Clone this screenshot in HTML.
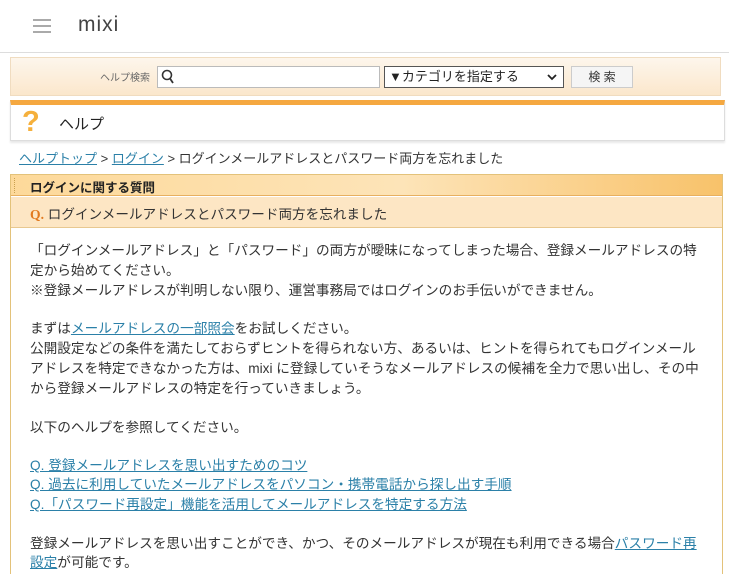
<!DOCTYPE html>
<html style="overflow:hidden;width:729px;height:574px"><head><meta charset="utf-8"><style>
*{margin:0;padding:0;box-sizing:border-box}
body{width:729px;height:574px;overflow:hidden;background:#fff;font-family:"Liberation Sans","Noto Sans CJK JP",sans-serif;color:#333;position:relative}
.a{position:absolute;white-space:nowrap}
a{color:#2b80a8;text-decoration:underline}
.t{font-size:13.65px;line-height:19px}
</style></head><body>
<div class="a" style="left:33px;top:19px;width:18px;height:2px;background:#aaa;box-shadow:0 6px 0 #aaa,0 12px 0 #aaa"></div>
<div class="a" style="left:78px;top:13px;font-size:21px;color:#444;letter-spacing:1px">mixi</div>
<div class="a" style="left:0;top:52px;width:729px;height:1px;background:#ddd"></div>

<div class="a" style="left:10px;top:57px;width:711px;height:39px;background:linear-gradient(#fdf6ec,#fbe7cc);border:1px solid #f0dcc0"></div>
<div class="a" style="left:100px;top:69px;font-size:10px;color:#666">ヘルプ検索</div>
<div class="a" style="left:157px;top:66px;width:223px;height:22px;background:#fff;border:1px solid #bbb"></div>
<svg class="a" style="left:161px;top:69px" width="14" height="16" viewBox="0 0 14 16"><circle cx="6" cy="6" r="4.5" fill="none" stroke="#333" stroke-width="1.6"/><path d="M9 9.5L12 14" stroke="#333" stroke-width="1.8"/></svg>
<div class="a" style="left:384px;top:66px;width:180px;height:22px;background:#fff;border:1px solid #555;font-size:13px;line-height:20px;padding-left:4px;color:#222">▼カテゴリを指定する<svg style="position:absolute;right:6px;top:7px" width="10" height="7"><path d="M1 1L5 5L9 1" fill="none" stroke="#222" stroke-width="1.8"/></svg></div>
<div class="a" style="left:571px;top:66px;width:62px;height:22px;background:#f5f5f5;border:1px solid #ccc;font-size:12px;line-height:20px;text-align:center;color:#333">検 索</div>

<div class="a" style="left:10px;top:100px;width:715px;height:41px;border:1px solid #ddd;border-top:5px solid #f5a840;background:#fff;box-shadow:0 2px 2px #e8e8e8"></div>
<div class="a" style="left:22px;top:106px;font-size:29px;font-weight:bold;color:#f5b03c;line-height:32px">?</div>
<div class="a" style="left:59px;top:113px;font-size:15px;color:#222">ヘルプ</div>

<div class="a" style="left:19px;top:149px;font-size:13px;line-height:19px"><a>ヘルプトップ</a> &gt; <a>ログイン</a> &gt; ログインメールアドレスとパスワード両方を忘れました</div>

<div class="a" style="left:10px;top:174px;width:713px;height:410px;border:1px solid #e3c27a"></div>
<div class="a" style="left:11px;top:175px;width:711px;height:21px;background:linear-gradient(90deg,#fdd99a,#fde4b8 55%,#f8c26a);border-bottom:1px solid #e8b060"></div>
<div class="a" style="left:14px;top:178px;width:2px;height:15px;border-left:1px dotted #c9a050"></div>
<div class="a" style="left:30px;top:177px;font-size:12.5px;font-weight:bold;color:#222">ログインに関する質問</div>
<div class="a" style="left:11px;top:197px;width:711px;height:31px;background:#fde6c4;border-bottom:1px solid #e8c890"></div>
<div class="a" style="left:30px;top:203px;font-size:13.6px;color:#333"><span style="color:#e27a20;font-weight:bold;font-family:'Liberation Serif',serif">Q.</span> ログインメールアドレスとパスワード両方を忘れました</div>

<div class="a t" style="left:30px;top:241px">「ログインメールアドレス」と「パスワード」の両方が曖昧になってしまった場合、登録メールアドレスの特</div>
<div class="a t" style="left:30px;top:261px">定から始めてください。</div>
<div class="a t" style="left:30px;top:281px">※登録メールアドレスが判明しない限り、運営事務局ではログインのお手伝いができません。</div>
<div class="a t" style="left:30px;top:319px">まずは<a>メールアドレスの一部照会</a>をお試しください。</div>
<div class="a t" style="left:30px;top:339px">公開設定などの条件を満たしておらずヒントを得られない方、あるいは、ヒントを得られてもログインメール</div>
<div class="a t" style="left:30px;top:359px">アドレスを特定できなかった方は、mixi に登録していそうなメールアドレスの候補を全力で思い出し、その中</div>
<div class="a t" style="left:30px;top:379px">から登録メールアドレスの特定を行っていきましょう。</div>
<div class="a t" style="left:30px;top:418px">以下のヘルプを参照してください。</div>
<div class="a t" style="left:30px;top:456px"><a>Q. 登録メールアドレスを思い出すためのコツ</a></div>
<div class="a t" style="left:30px;top:475px"><a>Q. 過去に利用していたメールアドレスをパソコン・携帯電話から探し出す手順</a></div>
<div class="a t" style="left:30px;top:495px"><a>Q.「パスワード再設定」機能を活用してメールアドレスを特定する方法</a></div>
<div class="a t" style="left:30px;top:534px">登録メールアドレスを思い出すことができ、かつ、そのメールアドレスが現在も利用できる場合<a>パスワード再</a></div>
<div class="a t" style="left:30px;top:553px"><a>設定</a>が可能です。</div>
</body></html>
